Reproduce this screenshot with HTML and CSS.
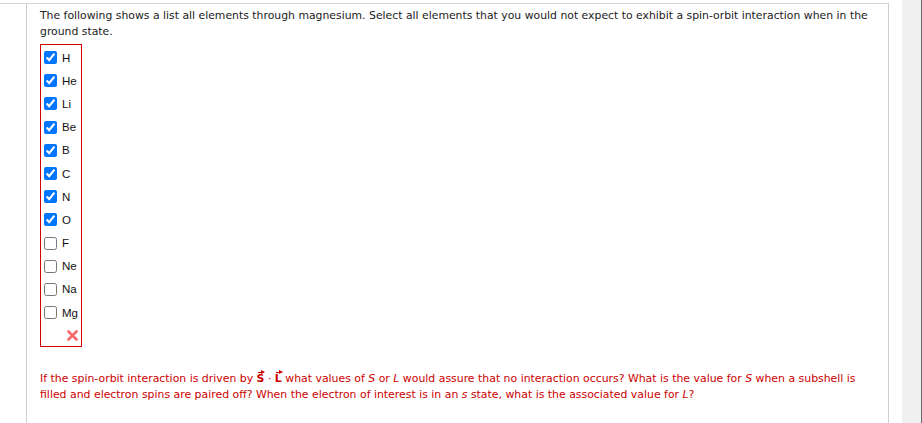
FILE: index.html
```html
<!DOCTYPE html>
<html lang="en">
<head>
<meta charset="utf-8">
<title>Spin-orbit question</title>
<link rel="stylesheet" href="styles.css">
</head>
<body>
<div class="layout">
  <div class="main">
    <div class="content">
      <p class="question">The following shows a list all elements through magnesium. Select all elements that you would not expect to exhibit a spin-orbit interaction when in the ground state.</p>
      <div class="answers">
        <label class="opt"><input type="checkbox" checked><span>H</span></label>
        <label class="opt"><input type="checkbox" checked><span>He</span></label>
        <label class="opt"><input type="checkbox" checked><span>Li</span></label>
        <label class="opt"><input type="checkbox" checked><span>Be</span></label>
        <label class="opt"><input type="checkbox" checked><span>B</span></label>
        <label class="opt"><input type="checkbox" checked><span>C</span></label>
        <label class="opt"><input type="checkbox" checked><span>N</span></label>
        <label class="opt"><input type="checkbox" checked><span>O</span></label>
        <label class="opt"><input type="checkbox"><span>F</span></label>
        <label class="opt"><input type="checkbox"><span>Ne</span></label>
        <label class="opt"><input type="checkbox"><span>Na</span></label>
        <label class="opt"><input type="checkbox"><span>Mg</span></label>
        <div class="mark">
          <svg width="11" height="11" viewBox="0 0 11 11"><path d="M1.5 1.5 L9.5 9.5 M9.5 1.5 L1.5 9.5" stroke="#f46a6a" stroke-width="2.6" stroke-linecap="round"/></svg>
        </div>
      </div>
      <p class="hint"><span>If the spin-orbit interaction is driven by </span><b class="vec">S</b><span> · </span><b class="vec">L</b><span> what values of </span><i>S</i><span> or </span><i>L</i><span> would assure that no interaction occurs? What is the value for </span><i>S</i><span> when a subshell is </span><span>filled and electron spins are paired off? When the electron of interest is in an </span><i>s</i><span> state, what is the associated value for </span><i>L</i><span>?</span></p>
    </div>
  </div>
  <div class="gutter"></div>
  <div class="scroll"></div>
</div>
</body>
</html>
```

FILE: styles.css
```css
html, body {
  margin: 0;
  padding: 0;
  background: #fff;
}
.layout {
  display: flex;
  width: 922px;
  height: 423px;
  overflow: hidden;
}
.main {
  width: 889px;
  margin-top: 3px;
  border-top: 1px solid #d4d4d4;
  box-sizing: border-box;
  flex: none;
}
.content {
  margin-left: 26px;
  height: 100%;
  border-left: 1px solid #cfcfcf;
  border-right: 1px solid #cfcfcf;
  padding: 4px 13px 0 13px;
  font-family: "DejaVu Sans", Verdana, sans-serif;
  font-size: 10.85px;
  line-height: 16px;
  color: #222;
}
.question {
  margin: 0;
}
.answers {
  margin-top: 4px;
  border: 1px solid #d40000;
  padding: 1px 0 0 3px;
  box-sizing: border-box;
  width: 42px;
}
.opt {
  display: flex;
  align-items: center;
  height: 23.2px;
  font-family: "Liberation Sans", Arial, sans-serif;
  font-size: 11.5px;
  color: #111;
}
.opt input {
  margin: 0 5px 0 0;
  width: 13px;
  height: 13px;
  accent-color: #0075ff;
}
.mark {
  height: 22px;
  display: flex;
  align-items: center;
  justify-content: flex-end;
  padding-right: 3px;
}
.mark svg {
  display: block;
}
.hint {
  margin: 24px 0 0 0;
  font-size: 10.9px;
  color: #cc0000;
}
.vec {
  position: relative;
}
.vec::before {
  content: "";
  position: absolute;
  left: 1px;
  right: 0;
  top: 0;
  height: 1px;
  background: #cc0000;
}
.vec::after {
  content: "";
  position: absolute;
  right: -1px;
  top: -2px;
  border-left: 4px solid #cc0000;
  border-top: 2.5px solid transparent;
  border-bottom: 2.5px solid transparent;
}
.gutter {
  width: 13px;
  flex: none;
}
.scroll {
  width: 20px;
  flex: none;
  background: #f0f0f0;
  border-right: 1px solid #6a6a6a;
  box-sizing: border-box;
}
```
